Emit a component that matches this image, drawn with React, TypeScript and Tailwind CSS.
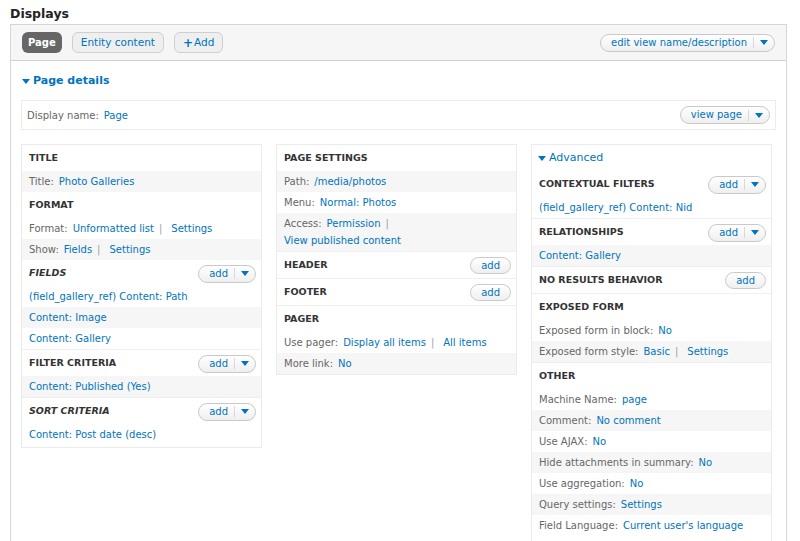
import React from "react";

type Item = { label?: string; links: string[]; gray?: boolean };

type SectionProps = {
  title: string;
  italic?: boolean;
  add?: "single" | "drop";
  items?: Item[];
  divider?: boolean;
};

function Caret({ className = "" }: { className?: string }) {
  return (
    <svg width="8" height="5" viewBox="0 0 8 5" className={className}>
      <path d="M0 0h8L4 5z" fill="#0074bd" />
    </svg>
  );
}

function DropPill({ text }: { text: string }) {
  return (
    <span className="flex h-[18px] items-center rounded-full border border-[#c9c9c9] bg-linear-to-b from-white to-[#efefef] pl-[10px] pr-[6px] text-[10px] leading-none text-[#0074bd]">
      {text}
      <span className="mx-[6px] h-[11px] w-px bg-[#d8d8d8]" />
      <Caret />
    </span>
  );
}

function AddPill() {
  return (
    <span className="flex h-[17px] items-center rounded-full border border-[#c9c9c9] bg-linear-to-b from-white to-[#efefef] px-[10px] text-[10px] leading-none text-[#0074bd]">
      add
    </span>
  );
}

function Row({ item }: { item: Item }) {
  const parts = item.links.map((l, i) => (
    <React.Fragment key={i}>
      {i > 0 && <span className="ml-[5px] mr-[9px] text-[#a0a0a0]">|</span>}
      <span className="text-[#0074bd]">{l}</span>
    </React.Fragment>
  ));
  return (
    <div
      className={`flex h-[21px] items-center whitespace-nowrap px-[7px] text-[10px] ${
        item.gray ? "bg-[#f6f6f6]" : ""
      }`}
    >
      {item.label && <span className="mr-[5px] text-[#666]">{item.label}:</span>}
      {parts}
    </div>
  );
}

function Section({ title, italic, add, items = [], divider }: SectionProps) {
  return (
    <div className={divider ? "border-b border-[#efefef]" : ""}>
      <div className="flex h-[26px] items-center justify-between pl-[7px] pr-[5px] pt-[1px]">
        <span
          className={`text-[9.5px] font-bold text-[#333] ${italic ? "italic" : ""}`}
        >
          {title}
        </span>
        {add === "drop" && <DropPill text="add" />}
        {add === "single" && <AddPill />}
      </div>
      {items.map((it, i) => (
        <Row key={i} item={it} />
      ))}
    </div>
  );
}

function Column({ children }: { children: React.ReactNode }) {
  return <div className="w-[241px] border border-[#ebebeb]">{children}</div>;
}

export default function App() {
  return (
    <div className="min-h-[541px] bg-white font-['DejaVu_Sans',sans-serif] text-[#333]">
      <h2 className="px-[10px] pt-[5px] text-[12.5px] font-bold leading-[17px] text-[#222]">
        Displays
      </h2>

      <div className="ml-[10px] mt-[2px] w-[777px] border border-[#d6d6d6] pb-[20px]">
        {/* tab bar */}
        <div className="flex h-[36px] items-center justify-between border-b border-[#d0d0d0] bg-[#f6f6f6] px-[11px]">
          <div className="flex items-center gap-[10px]">
            <span className="flex h-[21px] items-center rounded-[6px] bg-[#666] px-[6px] text-[10px] font-bold text-white">
              Page
            </span>
            <span className="flex h-[21px] items-center rounded-[6px] border border-[#cfcfcf] bg-[#efefef] px-[8px] text-[10.5px] text-[#0074bd]">
              Entity content
            </span>
            <span className="flex h-[21px] items-center rounded-[6px] border border-[#cfcfcf] bg-[#efefef] px-[8px] text-[10.5px] text-[#0074bd]">
              <span className="mr-[1px] text-[12px] font-bold leading-none">+</span>Add
            </span>
          </div>
          <DropPill text="edit view name/description" />
        </div>

        <div className="px-[10px]">
          <div className="mt-[10px] flex h-[20px] items-center gap-[3px] pl-[1px]">
            <Caret />
            <span className="text-[11px] font-bold text-[#0074bd]">Page details</span>
          </div>

          <div className="mt-[9px] flex h-[30px] items-center justify-between border border-[#ececec] pl-[5px] pr-[5px] text-[10px]">
            <span>
              <span className="mr-[5px] text-[#666]">Display name:</span>
              <span className="text-[#0074bd]">Page</span>
            </span>
            <DropPill text="view page" />
          </div>

          <div className="mt-[14px] flex items-start gap-[14px]">
            <Column>
              <Section title="TITLE" items={[{ label: "Title", links: ["Photo Galleries"], gray: true }]} />
              <Section
                title="FORMAT"
                items={[
                  { label: "Format", links: ["Unformatted list", "Settings"] },
                  { label: "Show", links: ["Fields", "Settings"], gray: true },
                ]}
              />
              <Section
                title="FIELDS"
                italic
                add="drop"
                divider
                items={[
                  { links: ["(field_gallery_ref) Content: Path"] },
                  { links: ["Content: Image"], gray: true },
                  { links: ["Content: Gallery"] },
                ]}
              />
              <Section
                title="FILTER CRITERIA"
                add="drop"
                divider
                items={[{ links: ["Content: Published (Yes)"], gray: true }]}
              />
              <Section
                title="SORT CRITERIA"
                italic
                add="drop"
                items={[{ links: ["Content: Post date (desc)"] }]}
              />
              <div className="h-[2px]" />
            </Column>

            <Column>
              <div className="border-b border-[#efefef]">
                <div className="flex h-[26px] items-center pl-[7px] pt-[1px]">
                  <span className="text-[9.5px] font-bold text-[#333]">PAGE SETTINGS</span>
                </div>
                <Row item={{ label: "Path", links: ["/media/photos"], gray: true }} />
                <Row item={{ label: "Menu", links: ["Normal: Photos"] }} />
                <div className="flex h-[38px] flex-col justify-center bg-[#f6f6f6] px-[7px] text-[10px] leading-[17px]">
                  <span className="whitespace-nowrap">
                    <span className="mr-[5px] text-[#666]">Access:</span>
                    <span className="text-[#0074bd]">Permission</span>
                    <span className="ml-[5px] text-[#a0a0a0]">|</span>
                  </span>
                  <span className="text-[#0074bd]">View published content</span>
                </div>
              </div>
              <Section title="HEADER" add="single" divider />
              <Section title="FOOTER" add="single" divider />
              <Section
                title="PAGER"
                items={[
                  { label: "Use pager", links: ["Display all items", "All items"] },
                  { label: "More link", links: ["No"], gray: true },
                ]}
              />
            </Column>

            <Column>
              <div className="flex h-[26px] items-center gap-[3px] pl-[6px]">
                <Caret />
                <span className="text-[11px] text-[#0074bd]">Advanced</span>
              </div>
              <Section
                title="CONTEXTUAL FILTERS"
                add="drop"
                divider
                items={[{ links: ["(field_gallery_ref) Content: Nid"] }]}
              />
              <Section
                title="RELATIONSHIPS"
                add="drop"
                divider
                items={[{ links: ["Content: Gallery"], gray: true }]}
              />
              <Section title="NO RESULTS BEHAVIOR" add="single" divider />
              <Section
                title="EXPOSED FORM"
                divider
                items={[
                  { label: "Exposed form in block", links: ["No"] },
                  { label: "Exposed form style", links: ["Basic", "Settings"], gray: true },
                ]}
              />
              <Section
                title="OTHER"
                items={[
                  { label: "Machine Name", links: ["page"] },
                  { label: "Comment", links: ["No comment"], gray: true },
                  { label: "Use AJAX", links: ["No"] },
                  { label: "Hide attachments in summary", links: ["No"], gray: true },
                  { label: "Use aggregation", links: ["No"] },
                  { label: "Query settings", links: ["Settings"], gray: true },
                  { label: "Field Language", links: ["Current user's language"] },
                ]}
              />
              <div className="h-[10px]" />
            </Column>
          </div>
        </div>
      </div>
    </div>
  );
}
